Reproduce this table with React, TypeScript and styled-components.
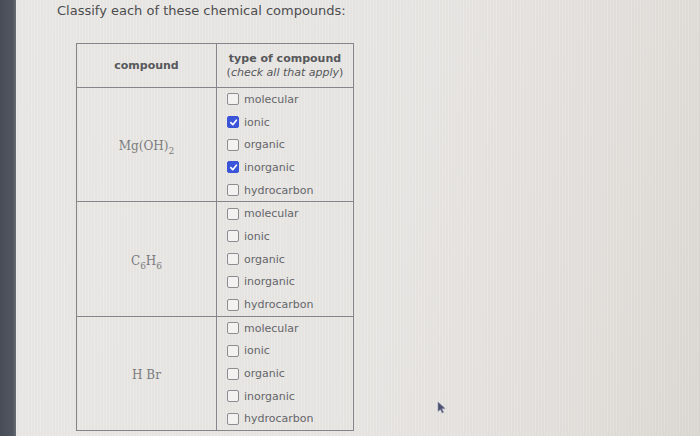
import React from "react";
import styled, { createGlobalStyle } from "styled-components";

const GlobalStyle = createGlobalStyle`
  html, body { margin: 0; padding: 0; }
  body { width: 700px; height: 436px; overflow: hidden; background: #e7e5e2; }
`;

const Page = styled.div`
  display: flex;
  width: 700px;
  height: 436px;
  position: relative;
`;

const Bezel = styled.div`
  width: 16px;
  flex: none;
  background: linear-gradient(90deg, #474c57 0%, #515661 80%, #6a6e74 100%);
`;

const Screen = styled.main`
  flex: 1;
  padding: 3px 0 0 41px;
  background:
    repeating-linear-gradient(90deg, rgba(255,255,255,0.1) 0 1px, rgba(0,0,0,0.01) 1px 3px),
    linear-gradient(100deg, #e9e8e5 0%, #e8e6e3 55%, #e2dfdb 85%, #dcd8d3 100%);
`;

const Title = styled.h1`
  margin: 0;
  font: 400 13px/16px "DejaVu Sans", Verdana, sans-serif;
  color: #4d4d4f;
`;

const Table = styled.table`
  margin: 24px 0 0 19px;
  border-collapse: collapse;
  border: 1px solid #85868a;
  font-family: "DejaVu Sans", Verdana, sans-serif;
`;

const HeadCell = styled.th<{ $w: number }>`
  width: ${(p) => p.$w}px;
  height: 42px;
  padding: 1px 0 0;
  border: 1px solid #85868a;
  font-size: 11px;
  line-height: 14px;
  font-weight: 700;
  color: #57585b;
  text-align: center;
  vertical-align: middle;
`;

const Note = styled.span`
  display: block;
  font-weight: 400;
  color: #55565a;
`;

const Em = styled.em`
  font-style: italic;
`;

const Cell = styled.td`
  padding: 0;
  border: 1px solid #85868a;
  text-align: center;
  vertical-align: middle;
`;

const Formula = styled.span`
  font: 400 12px/14px "DejaVu Serif", Georgia, serif;
  color: #7a7b7e;
  sub {
    font-size: 9px;
    line-height: 0;
    vertical-align: -4px;
  }
`;

const Options = styled.div`
  display: flex;
  flex-direction: column;
  padding: 0 0 0 10px;
`;

const Option = styled.label`
  display: flex;
  align-items: center;
  gap: 5px;
  height: 22.7px;
  font-size: 11px;
  color: #64656a;
  text-align: left;
`;

const Box = styled.span<{ $on: boolean }>`
  box-sizing: border-box;
  width: 12px;
  height: 12px;
  flex: none;
  border-radius: 2px;
  border: 1px solid ${(p) => (p.$on ? "#3a52d4" : "#8c8d91")};
  background: ${(p) => (p.$on ? "#3a55da" : "#f3f2f0")};
  display: flex;
  align-items: center;
  justify-content: center;
`;

const Cursor = styled.svg`
  position: absolute;
  left: 437px;
  top: 401px;
`;

const options = ["molecular", "ionic", "organic", "inorganic", "hydrocarbon"];

const rows: { formula: React.ReactNode; checked: string[] }[] = [
  { formula: <>Mg(OH)<sub>2</sub></>, checked: ["ionic", "inorganic"] },
  { formula: <>C<sub>6</sub>H<sub>6</sub></>, checked: [] },
  { formula: <>H Br</>, checked: [] },
];

const Check = () => (
  <svg width="9" height="9" viewBox="0 0 10 10">
    <path d="M2 5.2 L4.2 7.4 L8.2 2.4" fill="none" stroke="#fff" strokeWidth="1.8" strokeLinecap="round" strokeLinejoin="round" />
  </svg>
);

export default function App() {
  return (
    <>
      <GlobalStyle />
      <Page>
        <Bezel />
        <Screen>
          <Title>Classify each of these chemical compounds:</Title>
          <Table>
            <thead>
              <tr>
                <HeadCell $w={139}>compound</HeadCell>
                <HeadCell $w={136}>
                  type of compound
                  <Note>
                    (<Em>check all that apply</Em>)
                  </Note>
                </HeadCell>
              </tr>
            </thead>
            <tbody>
              {rows.map((r, i) => (
                <tr key={i}>
                  <Cell>
                    <Formula>{r.formula}</Formula>
                  </Cell>
                  <Cell>
                    <Options>
                      {options.map((o) => {
                        const on = r.checked.includes(o);
                        return (
                          <Option key={o}>
                            <Box $on={on}>{on && <Check />}</Box>
                            {o}
                          </Option>
                        );
                      })}
                    </Options>
                  </Cell>
                </tr>
              ))}
            </tbody>
          </Table>
        </Screen>
        <Cursor width="10" height="13" viewBox="0 0 10 13">
          <path d="M1 1 L1 10.5 L3.4 8.4 L5.2 12 L6.6 11.3 L4.9 7.8 L8.2 7.6 Z" fill="#4b5270" stroke="#8d93ad" strokeWidth="0.6" />
        </Cursor>
      </Page>
    </>
  );
}
